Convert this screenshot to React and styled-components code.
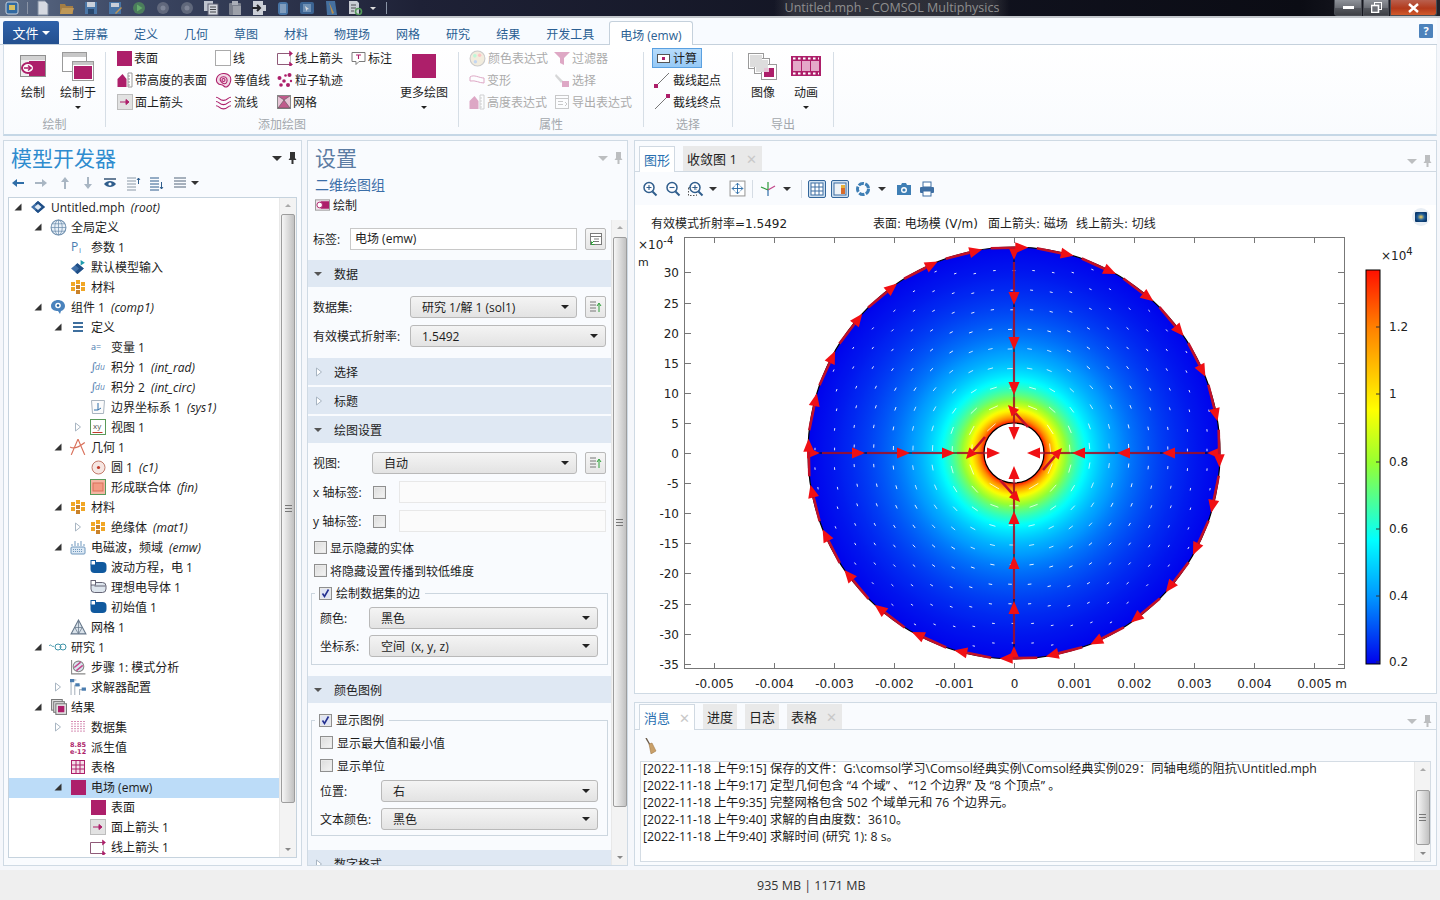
import React from 'react';
import styled, { createGlobalStyle } from 'styled-components';

const FONT = '"Open Sans", "Noto Sans CJK SC", sans-serif';
const M = '#ad1f6a';
const BL = '#2f6ea8';

const Global = createGlobalStyle`
  html, body { margin: 0; padding: 0; background: #f5f7fb; }
  #root { width: 1440px; height: 900px; overflow: hidden; }
  * { box-sizing: border-box; }
`;

const Ico = styled.svg`
  width: ${p => p.$w}px; height: ${p => p.$h}px; flex: none; display: block;
  opacity: ${p => (p.$dim ? 0.38 : 1)};
`;
const Sv = ({ s = 16, w, h, vb = '0 0 16 16', dim, children }) => (
  <Ico $w={w || s} $h={h || s} $dim={dim} viewBox={vb}>{children}</Ico>
);

const Shell = styled.div`
  width: 1440px; height: 900px; display: flex; flex-direction: column; position: relative;
  font-family: ${FONT}; font-size: 12px; color: #1c1c1c; background: #f5f7fb;
`;

/* title bar */
const TitleBar = styled.div`
  height: 18px; flex: none; display: flex; align-items: flex-start;
  background: linear-gradient(90deg, #5d6d87 0, #3c4763 130px, #1e2136 420px, #111320 900px, #0b0c14 1300px, #23242c 100%);
  border-bottom: 2px solid #c3c7cc;
`;
const QuickBar = styled.div`
  display: flex; align-items: center; height: 16px; padding-left: 4px; gap: 8px;
`;
const QuickIcon = styled.span`display: flex; opacity: .82;`;
const QuickGap = styled.span`width: 1px; height: 12px; background: #8a94a6; margin: 0 ${p => p.$m ?? 4}px;`;
const AppTitle = styled.div`
  position: absolute; left: 774px; top: 0; width: 236px; height: 16px; text-align: center;
  line-height: 16px; font-size: 12.5px; color: #8e8e8e;
  background: linear-gradient(90deg, transparent, rgba(120,120,120,.28) 8%, rgba(120,120,120,.28) 92%, transparent);
`;
const WinBtns = styled.div`margin-left: auto; margin-right: 3px; display: flex; height: 16px; gap: 1px;`;
const WinBtn = styled.div`
  width: ${p => p.$w}px; height: 16px; display: flex; align-items: center; justify-content: center;
  border: 1px solid #4a4d55; border-top: none;
  border-radius: ${p => p.$r || '0'};
  background: ${p => (p.$close
    ? 'linear-gradient(180deg, #b9604e 0, #b33a1c 55%, #d25a2c 100%)'
    : 'linear-gradient(180deg, #8e9299 0, #6d7077 50%, #55585f 52%, #3e4046 100%)')};
`;

/* ribbon */
const TabRow = styled.div`
  height: 27px; flex: none; display: flex; align-items: flex-end; padding-left: 3px;
  background: #f8fbff; border-bottom: 1px solid #c5d1dc; margin: 0 3px 0 0;
`;
const FileBtn = styled.div`
  width: 56px; height: 23px; display: flex; align-items: center; justify-content: center; gap: 3px;
  color: #fff; font-size: 13px; border-radius: 2px 2px 0 0;
  background: linear-gradient(180deg, #2f62aa, #24508f);
`;
const Caret = styled.span`
  display: inline-block; flex: none; width: 0; height: 0;
  border-left: ${p => p.$s || 4}px solid transparent; border-right: ${p => p.$s || 4}px solid transparent;
  border-top: ${p => p.$s || 4}px solid ${p => p.$c || '#222'};
  margin: ${p => p.$m || '0'};
`;
const CaretUp = styled(Caret)`transform: rotate(180deg);`;
const RTab = styled.div`
  height: 23px; padding: 4px 13px 0; font-size: 12px; color: #2b5f93; line-height: 20px;
  &:first-of-type { margin-left: 1px; }
`;
const RTabActive = styled.div`
  height: 24px; padding: 3px 10px 0; margin: 0 0 -1px 2px; line-height: 21px; color: #2b5f93;
  background: #fff; border: 1px solid #c5d1dc; border-bottom: none; border-radius: 3px 3px 0 0;
  white-space: nowrap;
`;
const HelpBtn = styled.div`
  margin-left: auto; margin-right: 4px; margin-bottom: 6px; width: 14px; height: 14px; background: #4d82bb;
  color: #fff; font-size: 11px; font-weight: 700; text-align: center; line-height: 14px; border-radius: 1px;
`;
const Ribbon = styled.div`
  height: 91px; flex: none; margin: 0 3px; display: flex;
  background: linear-gradient(180deg, #fff 0, #f9fbfe 100%);
  border-bottom: 2px solid #c5d7e6; border-left: 1px solid #d3dee8; border-right: 1px solid #e3eaf0;
`;
const RGroup = styled.div`width: ${p => p.$w}px; flex: none; display: flex; flex-direction: column;`;
const RBody = styled.div`
  height: 72px; flex: none; padding: 2px 0 0 ${p => p.$pl || 0}px; display: flex;
`;
const RLabel = styled.div`height: 16px; text-align: center; color: #a3a8ad; font-size: 12px; line-height: 16px;`;
const RSep = styled.div`width: 1px; flex: none; background: #d6dee6; margin: 7px 0 7px;`;
const SmallCol = styled.div`width: ${p => p.$w}px; flex: none; display: flex; flex-direction: column;`;
const SmallBtn = styled.div`
  height: 22px; display: flex; align-items: center; gap: 2px; white-space: nowrap;
  color: ${p => (p.$off ? '#ababab' : '#1c1c1c')};
`;
const ActiveBtn = styled.div`
  height: 20px; margin: 1px 0 1px -1px; width: 50px; display: flex; align-items: center; gap: 3px; padding-left: 4px;
  background: linear-gradient(180deg, #b7dcfb, #96c9f6); border: 1px solid #5aa0e0;
`;
const BigBtn = styled.div`
  width: ${p => p.$w}px; flex: none; display: flex; flex-direction: column; align-items: center; white-space: nowrap;
`;
const BigIcon = styled.div`height: 38px; display: flex; align-items: center; justify-content: center;`;
const BigText = styled.div`height: 16px; line-height: 16px;`;
const BigCaret = styled.div`height: 12px; display: flex; align-items: center;`;

/* workspace */
const Work = styled.div`
  flex: 1; display: flex; padding: 4px 3px 4px; gap: 5px; min-height: 0;
`;
const Panel = styled.div`
  background: #f9fbfe; border: 1px solid #cfdae4; display: flex; flex-direction: column; min-height: 0; overflow: hidden;
  width: ${p => (p.$w ? p.$w + 'px' : 'auto')}; flex: none;
  height: ${p => (p.$h ? p.$h + 'px' : 'auto')};
`;
const Stack = styled.div`flex: none; width: 803px; margin-left: 1px; display: flex; flex-direction: column; gap: 8px;`;
const HeadRow = styled.div`
  display: flex; align-items: center; height: 33px; flex: none; padding: 1px 4px 0 7px;
`;
const BigTitle = styled.div`font-size: 21px; color: ${p => p.$c}; line-height: 30px;`;
const PinBox = styled.div`
  margin-left: auto; display: flex; align-items: center; gap: 6px; opacity: ${p => (p.$dim ? 0.3 : 1)};
`;
const ToolRow = styled.div`
  display: flex; align-items: center; height: ${p => p.$h}px; flex: none; padding-left: ${p => p.$pl}px; gap: ${p => p.$g || 0}px;
  background: ${p => p.$bg || 'transparent'};
`;
const ToolCell = styled.div`
  display: flex; align-items: center; justify-content: center; width: ${p => p.$w}px; flex: none; margin-left: ${p => p.$ml || 0}px;
`;
const ToolSep = styled.div`width: 1px; height: 18px; background: #d5dce4; flex: none; margin: 0 ${p => p.$r}px 0 ${p => p.$l}px;`;

const TreeBox = styled.div`
  margin: 5px 4px 0; height: 661px; flex: none; background: #fff; border: 1px solid #c6d3de; display: flex;
`;
const TreeList = styled.div`flex: 1; min-width: 0; overflow: hidden;`;
const TreeRowEl = styled.div`
  height: 20px; display: flex; align-items: center; padding: 0 0 2px ${p => 3 + p.$d * 20}px; white-space: nowrap;
  background: ${p => (p.$sel ? '#bcdcf8' : 'transparent')}; color: #1c1c1c;
`;
const Twisty = styled.span`
  width: 12px; height: 12px; flex: none; display: flex; align-items: center; justify-content: center;
`;
const TreeIcon = styled.span`width: 18px; height: 18px; flex: none; margin-left: 5px; display: flex; align-items: center; justify-content: center;`;
const TreeLabel = styled.span`margin-left: 4px;`;
const Tag = styled.i`margin-left: 6px; color: #222;`;

const ScrollTrack = styled.div`
  width: ${p => p.$w || 17}px; flex: none; background: #f3f3f3; border-left: 1px solid #e8e8e8;
  display: flex; flex-direction: column; align-items: center;
`;
const ScrollEnd = styled.div`
  height: 15px; flex: none; display: flex; align-items: center; justify-content: center; margin: ${p => p.$m || '0'};
`;
const ScrollThumb = styled.div`
  width: 14px; flex: none; height: ${p => p.$h}px; margin-top: ${p => p.$t}px; border: 1px solid #9d9d9d; border-radius: 2px;
  background: linear-gradient(90deg, #f6f6f6, #d9d9d9 55%, #c1c1c1);
  display: flex; align-items: center; justify-content: center;
`;
const Grip = styled.div`
  width: 7px; height: 7px;
  background: repeating-linear-gradient(180deg, #777 0 1px, transparent 1px 3px);
`;

/* settings */
const SubTitle = styled.div`
  height: 21px; flex: none; padding-left: 7px; font-size: 14px; color: #3b6ea8; line-height: 22px;
`;
const ActRow = styled.div`height: 20px; flex: none; padding-left: 7px; display: flex; align-items: center; gap: 3px;`;
const SetBody = styled.div`flex: 1; min-height: 0; display: flex; margin-top: 5px;`;
const SetScroll = styled.div`width: 303px; flex: none; overflow: hidden;`;
const Row = styled.div`
  height: 22px; display: flex; align-items: center; padding: 0 ${p => (p.$pr === undefined ? 5 : p.$pr)}px 0 ${p => (p.$pl === undefined ? 5 : p.$pl)}px;
  margin-top: ${p => p.$mt || 0}px; white-space: nowrap;
`;
const RowLabel = styled.div`width: ${p => p.$l}px; flex: none;`;
const TextInput = styled.div`
  flex: 1; height: 22px; background: ${p => (p.$off ? '#fbfbfb' : '#fff')}; border: 1px solid ${p => (p.$off ? '#e8e8e8' : '#c8c8c8')};
  padding-left: 4px; line-height: 20px; margin-left: ${p => p.$ml || 0}px;
`;
const Select = styled.div`
  flex: 1; height: 22px; display: flex; align-items: center; justify-content: space-between; padding: 0 7px 0 11px;
  border: 1px solid #b9b9b9; border-radius: 3px; background: linear-gradient(180deg, #f4f4f4, #e3e3e3);
`;
const SideBtn = styled.div`
  width: 21px; height: 22px; flex: none; margin-left: 8px; display: flex; align-items: center; justify-content: center;
  border: 1px solid #b9b9b9; border-radius: 2px; background: linear-gradient(180deg, #f6f6f6, #e6e6e6);
`;
const Check = styled.span`
  width: 13px; height: 13px; flex: none; border: 1px solid #8f8f8f; display: inline-flex; align-items: center; justify-content: center;
  background: ${p => (p.$on ? '#fff' : 'linear-gradient(135deg, #dcdcdc, #f4f4f4)')}; outline: 1px solid #e9e9e9; outline-offset: -2px;
`;
const CheckRow = styled.div`
  height: 23px; display: flex; align-items: center; gap: ${p => p.$g || 3}px; padding-left: ${p => p.$pl || 6}px;
`;
const Sect = styled.div`
  height: 27px; display: flex; align-items: center; background: #dfe8f3; padding-left: 6px;
  margin-top: ${p => p.$mt || 0}px; font-size: 12px;
`;
const SectArrow = styled.span`width: 11px; flex: none; display: flex; align-items: center; margin-right: 9px;`;
const Fset = styled.fieldset`
  margin: ${p => p.$mt || 0}px 0 0 3px; width: 297px; padding: 0 9px ${p => p.$pb}px 0; border: 1px solid #ccd6df; min-width: 0;
`;
const Leg = styled.legend`
  display: flex; align-items: center; gap: 4px; padding: 0 5px 0 4px; margin-left: 3px; height: 20px;
`;
const Spacer = styled.div`height: ${p => p.$h}px; flex: none;`;

/* graphics */
const TabStrip = styled.div`
  height: ${p => p.$h}px; flex: none; display: flex; align-items: flex-end; padding: 0 4px; gap: 8px;
  border-bottom: 1px solid #d0d9e2;
`;
const GTab = styled.div`
  height: ${p => (p.$on ? 26 : 25)}px; padding: 0 ${p => p.$pr ?? 4}px 0 4px; display: flex; align-items: center; gap: ${p => p.$gap ?? 9}px;
  font-size: 13px; color: ${p => (p.$on ? '#2a6fb0' : '#222')}; white-space: nowrap;
  background: ${p => (p.$on ? '#fff' : '#e9e9e9')};
  border: ${p => (p.$on ? '1px solid #d0d9e2' : 'none')}; border-bottom: none;
  margin-bottom: ${p => (p.$on ? -1 : 0)}px;
`;
const Close = styled.span`color: #c8c8c8; font-size: 13px;`;
const PinSlot = styled.div`margin-left: auto; align-self: center; padding-top: 10px;`;
const ToolToggle = styled.div`
  width: 18px; height: 18px; flex: none; display: flex; align-items: center; justify-content: center;
  background: #cfe0f0; border: 1px solid #33669b; border-radius: 2px;
`;
const PlotArea = styled.div`flex: 1; background: #fff; min-height: 0;`;
const PlotSvg = styled.svg`display: block; width: 801px; height: 488px;`;
const LogBar = styled.div`height: 31px; flex: none; padding: 8px 0 0 9px;`;
const LogBox = styled.div`
  margin: 0 5px; height: 101px; flex: none; display: flex; background: #fff; border: 1px solid #d4dce4;
`;
const LogText = styled.div`flex: 1; padding: 0 2px; min-width: 0; font-size: 12.25px;`;
const LogLine = styled.div`height: 17px; line-height: 13px; white-space: nowrap;`;
const Status = styled.div`
  height: 30px; flex: none; background: #efefef; font-size: 12.5px; color: #333; display: flex; align-items: center; padding-left: 757px;
`;

/* ---- icons ---- */
const plotIcon = (
  <Sv w={26} h={22} vb="0 0 26 22">
    <rect x=".5" y=".5" width="25" height="21" fill="#efeff1" stroke="#8f8f8f" />
    <rect x="1" y="1" width="24" height="4" fill="#d2d2d2" />
    <rect x="9" y="6" width="16" height="15" fill={M} />
    <ellipse cx="8" cy="13" rx="6" ry="5" fill="#fff" stroke={M} strokeWidth="2" />
    <path d="M4 13h6M8 10.5l3 2.5-3 2.5" fill="none" stroke={M} strokeWidth="1.6" />
  </Sv>
);
const plotInIcon = (
  <Sv w={32} h={29} vb="0 0 32 29">
    <rect x=".5" y=".5" width="24" height="19" fill="#fff" stroke="#9a9a9a" />
    <rect x="1" y="1" width="23" height="4" fill="#c7c7c7" />
    <rect x="10.5" y="9.5" width="21" height="19" fill="#fff" stroke="#9a9a9a" />
    <rect x="11" y="10" width="20" height="3" fill="#c7c7c7" />
    <rect x="12" y="14" width="18" height="13" fill={M} />
  </Sv>
);
const I = {
  surface: <Sv s={15} vb="0 0 15 15"><rect width="15" height="15" fill={M} /></Sv>,
  height: <Sv s={16}><path d="M.5 15V7l5-5 4 5v8z" fill={M} /><path d="M11 1h4v14h-4z" fill="#fff" stroke="#999" /><path d="M11 4h2M11 7h2M11 10h2M11 13h2" stroke="#999" /></Sv>,
  arrowSurf: <Sv s={16}><rect x=".5" y=".5" width="15" height="15" fill="#e2e2e2" stroke="#bdbdbd" /><path d="M3 8h8M9 5.5l3 2.5-3 2.5z" fill={M} stroke={M} /></Sv>,
  line: <Sv s={16}><rect x=".5" y=".5" width="15" height="15" fill="#fff" stroke="#aaa" /></Sv>,
  contour: <Sv s={17} vb="0 0 16 16"><path d="M2 5c2-4 9-5 12-1 2 3 0 9-3 10-2 1-3-2-5-2C3 12 0 9 2 5z" fill="#f2d8e6" stroke={M} /><path d="M5 6c1-2 5-2 6 0 1 2 0 5-2 5s-5-3-4-5z" fill="none" stroke={M} /><circle cx="8" cy="7.5" r="1.4" fill="none" stroke={M} /></Sv>,
  stream: <Sv s={17} vb="0 0 16 16"><path d="M1 3c3 0 3 3 7 3s4-3 7-3M1 7c3 0 3 3 7 3s4-3 7-3M1 11c3 0 3 3 7 3s4-3 7-3" fill="none" stroke={M} /></Sv>,
  lineArrow: <Sv s={16}><path d="M.5 3.5h13M.5 3.5v11h13" fill="none" stroke="#8f5a78" /><path d="M13.5 3.5v11" stroke="#bbb" /><path d="M12.5 1l3 2.5-3 2.5zM12.5 12l3 2.5-3 2.5z" fill={M} stroke={M} strokeWidth=".6" /></Sv>,
  particle: <Sv s={16}><g fill={M}><circle cx="2.5" cy="6" r="2" /><circle cx="7" cy="9" r="1.8" /><circle cx="12.5" cy="3" r="2" /><circle cx="8.5" cy="3.5" r="1.3" /><circle cx="4" cy="13" r="1.8" /><circle cx="11" cy="13" r="2" /><circle cx="14" cy="9" r="1.2" /></g></Sv>,
  mesh: <Sv s={14} vb="0 0 14 14"><rect x=".5" y=".5" width="13" height="13" fill="#e6c4d6" stroke="#888" /><path d="M1 13 7 5l6 8zM1 1l6 4 6-4" fill="#c05a8c" stroke="#555" strokeWidth=".6" /></Sv>,
  annot: <Sv s={15} vb="0 0 15 15"><path d="M1 1.5h13v9H8l-3 3v-3H1z" fill="#fff" stroke="#7a7a7a" /><path d="M5 4h5M7.5 4v4" stroke={M} strokeWidth="1.1" /></Sv>,
  colorExpr: <Sv s={17} dim vb="0 0 16 16"><circle cx="8" cy="8" r="7" fill="#e0cfa8" stroke="#777" /><circle cx="5.5" cy="5.5" r="1.7" fill="#5e9" /><circle cx="10" cy="5" r="1.6" fill="#f66" /><circle cx="6" cy="11" r="1.6" fill="#69d" /></Sv>,
  deform: <Sv s={16} dim><path d="M1 5c4-3 9 1 14 1v5c-5 0-8-3-14-2z" fill="#fff" stroke={M} /></Sv>,
  heightExpr: <Sv s={16} dim><path d="M.5 15V7l5-5 4 5v8z" fill={M} /><path d="M11 1h4v14h-4z" fill="#fff" stroke="#888" /><path d="M11 4h2M11 7h2M11 10h2M11 13h2" stroke="#888" /></Sv>,
  filter: <Sv s={16} dim><path d="M0 2h16l-6 6v7l-4-2V8z" fill={M} /></Sv>,
  select: <Sv s={16} dim><path d="M2 2l7 7-2 2-6-7z" fill="#999" /><rect x="8" y="9" width="7" height="6" fill={M} /></Sv>,
  exportExpr: <Sv s={16} dim><rect x="1.5" y="1.5" width="13" height="13" fill="#fff" stroke="#777" /><path d="M1.5 4.5h13M4 7.5h5M4 10.5h5M11 8l2 2-2 2" fill="none" stroke="#777" /></Sv>,
  compute: <Sv s={13} vb="0 0 13 13"><rect x=".5" y="2.5" width="12" height="8" fill="#fff" stroke="#555" /><rect x="5" y="5" width="3" height="3" fill={M} /></Sv>,
  cutStart: <Sv s={18} vb="0 0 18 18"><path d="M3 15 16 2" stroke="#777" /><rect x="1" y="13" width="4" height="4" fill={M} /></Sv>,
  cutEnd: <Sv s={18} vb="0 0 18 18"><path d="M2 16 15 3" stroke="#777" /><rect x="13" y="1" width="4" height="4" fill={M} /></Sv>,
  image: <Sv w={30} h={27} vb="0 0 30 27"><g fill="#fff" stroke="#9a9a9a"><rect x=".5" y=".5" width="15" height="15" /><rect x="6.5" y="5.5" width="15" height="15" /><rect x="13.5" y="11.5" width="15" height="15" /></g><rect x="2" y="2" width="12" height="12" fill="#ddd" /><rect x="8" y="7" width="12" height="12" fill="#ddd" /><rect x="16" y="15" width="10" height="9" fill={M} /><rect x="16" y="15" width="5" height="4" fill="#e6c4d6" /></Sv>,
  movie: <Sv w={30} h={20} vb="0 0 30 20">
    <rect width="30" height="20" fill={M} /><rect x="2" y="5" width="8" height="10" fill="#e4a8c8" /><rect x="11" y="5" width="8" height="10" fill="#e4a8c8" /><rect x="20" y="5" width="8" height="10" fill="#e4a8c8" />
    <path d="M2 2.5h26M2 17.5h26" stroke="#fff" strokeWidth="2" strokeDasharray="2.5 2.5" />
  </Sv>,
  /* tree */
  root: <Sv s={16}><path d="M1 8l7-6 7 6-7 6z" fill="#3f6fa8" /><path d="M8 2l7 6-7 6-3-2.5L9 8 5 4.5z" fill="#1f4e86" /><path d="M4.5 8 8 5l3.5 3L8 11z" fill="#dfe9f4" /></Sv>,
  globe: <Sv s={17} vb="0 0 16 16"><circle cx="8" cy="8" r="7" fill="#e8f0f8" stroke="#6f8fae" /><path d="M1 8h14M8 1v14M2 4.5h12M2 11.5h12" stroke="#6f8fae" strokeWidth=".7" /><ellipse cx="8" cy="8" rx="3.5" ry="7" fill="none" stroke="#6f8fae" strokeWidth=".7" /></Sv>,
  param: <Sv s={16}><text x="1" y="12" fontFamily="Open Sans" fontSize="12" fill="#4a7cb0">P</text><text x="9" y="14" fontFamily="Open Sans" fontSize="8" fill="#4a7cb0">i</text></Sv>,
  defIn: <Sv s={17} vb="0 0 16 16"><path d="M1 9l6-5 6 5-6 5z" fill="#3f6fa8" /><path d="M7 4l6 5-6 5-2-1.8L8.5 9 5 5.8z" fill="#1f4e86" /><path d="M10 1v5l4-2.5z" fill="#1e9cae" /></Sv>,
  material: <Sv s={15} vb="0 0 15 15"><g fill="#f0a626"><rect x="0" y="2" width="4" height="4" /><rect x="5" y="0" width="4" height="4" /><rect x="10" y="2" width="4" height="4" /><rect x="0" y="7" width="4" height="4" /><rect x="10" y="7" width="4" height="4" /></g><g fill="#c9822a"><rect x="5" y="5" width="4" height="4" /><rect x="5" y="10" width="4" height="4" /></g></Sv>,
  comp: <Sv s={16}><path d="M1 7c0-4 4-6 7-6s7 2 7 6-4 5-4 5l-1 3-2-3c-3 0-7-1-7-5z" fill="#4a83bd" /><circle cx="8" cy="6.5" r="2.8" fill="#fff" /><circle cx="8" cy="6.5" r="1.3" fill="#1f5d99" /></Sv>,
  defs: <Sv s={14} vb="0 0 14 14"><path d="M2 3h10M2 7h10M2 11h10" stroke="#3e6f9e" strokeWidth="1.8" /></Sv>,
  vari: <Sv s={16}><text x="1" y="11" fontFamily="Open Sans" fontSize="9" fill="#4a7cb0">a=</text></Sv>,
  integ: <Sv s={16}><text x="0" y="12" fontFamily="DejaVu Serif" fontStyle="italic" fontSize="12" fill="#5a86b4">∫</text><text x="5" y="11" fontFamily="Open Sans" fontStyle="italic" fontSize="8.5" fill="#5a86b4">du</text></Sv>,
  sys: <Sv s={16}><path d="M1.5 1.5h13l-1 13h-11z" fill="#fbfbfb" stroke="#a9b4bf" /><path d="M8 4v7H4M8 11l3-2" fill="none" stroke="#2f6ea8" /></Sv>,
  view: <Sv s={16}><rect x=".5" y=".5" width="15" height="15" fill="#fff" stroke="#5a9a5a" /><text x="3" y="10" fontFamily="Open Sans" fontSize="8" fill="#555">xy</text><path d="M2.5 13.5h10" stroke="#c0392b" /></Sv>,
  geom: <Sv s={18} vb="0 0 16 16"><path d="M8 1 2 15M8 1l6 14M1 8c3 2 8 0 13-4" fill="none" stroke="#d9705a" strokeWidth="1.1" /></Sv>,
  circ: <Sv s={15} vb="0 0 15 15"><circle cx="7.5" cy="7.5" r="6.5" fill="#f6e6e2" stroke="#c47a6a" /><circle cx="7.5" cy="7.5" r="1.6" fill="#c0392b" /></Sv>,
  union: <Sv s={16}><rect x=".5" y=".5" width="15" height="15" fill="#f4b6a4" stroke="#5a9a5a" /><rect x="3" y="4" width="10" height="8" fill="#f39b84" stroke="#d9705a" /></Sv>,
  emw: <Sv s={16}><rect x="1" y="8" width="14" height="7" rx="1" fill="#dbe8f4" stroke="#6f97bd" /><path d="M3 10.5h10M3 12.5h10" stroke="#6f97bd" strokeDasharray="1 1" /><path d="M2 7V5M5 7V2M8 7V4M11 7V2M14 7V5" stroke="#6f97bd" /></Sv>,
  wave: <Sv s={16} w={17}><rect x="0" y="3" width="16" height="11" rx="4" fill="#10599e" /><rect x=".5" y="1.5" width="4.5" height="4.5" fill="#fff" stroke="#10599e" /></Sv>,
  pec: <Sv s={16} w={17}><rect x=".5" y="3.5" width="15" height="10" rx="3.5" fill="#dde5ed" stroke="#667" /><rect x=".5" y="1.5" width="4.5" height="4.5" fill="#fff" stroke="#667" /><path d="M4 7h11" stroke="#667" /></Sv>,
  meshN: <Sv s={17} vb="0 0 16 16"><path d="M8 1 1 14h14z" fill="#d9e2ea" stroke="#66778a" /><path d="M4.5 8h7M8 1v13M4.5 8 8 14l3.5-6" fill="none" stroke="#66778a" strokeWidth=".7" /></Sv>,
  study: <Sv s={18} vb="0 0 18 12"><path d="M0 5c2-3 3 2 5 0" fill="none" stroke="#3e93a8" /><circle cx="9" cy="6" r="3" fill="none" stroke="#3e93a8" /><circle cx="14" cy="6" r="3" fill="none" stroke="#3e93a8" /></Sv>,
  step: <Sv s={17} vb="0 0 16 16"><path d="M1.5 1v13h13" fill="none" stroke="#888" /><circle cx="8" cy="7" r="5" fill="#d9e6f0" stroke="#888" /><path d="M4 8l6-5M6 11l6-5" stroke="#c2478a" strokeWidth="1.4" /></Sv>,
  solver: <Sv s={17} vb="0 0 16 16"><path d="M1 15V1h5M4.5 15V6h5M9 15V10h6" fill="none" stroke="#aab4bf" /><rect x="0" y="0" width="4" height="3" fill="#4a7db0" /><rect x="5" y="4" width="4" height="3" fill="#4a7db0" /><rect x="11" y="8" width="4" height="3" fill="#4a7db0" /></Sv>,
  results: <Sv s={17} vb="0 0 16 16"><g fill="#e6e6e6" stroke="#777"><rect x="1.5" y=".5" width="10" height="10" /><rect x="3.5" y="2.5" width="10" height="10" /><rect x="5.5" y="4.5" width="10" height="10" /></g><rect x="7.5" y="6.5" width="6" height="6" fill={M} /></Sv>,
  dataset: <Sv s={14} vb="0 0 14 14"><path d="M1 1v12M4 1v12M7 1v12M10 1v12M13 1v12" stroke={M} strokeDasharray="1 1.4" strokeWidth="1" /></Sv>,
  derived: <Sv s={16}><text x="0" y="7.5" fontFamily="DejaVu Sans" fontWeight="700" fontSize="6.5" fill={M}>8.85</text><text x="0" y="14.5" fontFamily="DejaVu Sans" fontWeight="700" fontSize="6.5" fill={M}>e-12</text></Sv>,
  table: <Sv s={14} vb="0 0 14 14"><rect x=".5" y=".5" width="13" height="13" fill="#f4dfe9" stroke={M} /><path d="M5 1v12M9 1v12M1 5h12M1 9h12" stroke={M} /></Sv>,
  treeSurf: <Sv s={15} vb="0 0 15 15"><rect width="15" height="15" fill={M} /></Sv>,
  sideBtnExport: <Sv s={14} vb="0 0 14 14"><rect x="1.5" y="1.5" width="11" height="11" fill="#fff" stroke="#7a7a7a" /><path d="M1.5 4.5h11M5 7h5M5 9.5h5" fill="none" stroke="#7a7a7a" /><path d="M2 12l3-3M2.5 9.5v3h3" fill="none" stroke="#2ea03a" /></Sv>,
  sideBtnList: <Sv s={14} vb="0 0 14 14"><path d="M1 2h6M1 5h6M1 8h6M1 11h6" stroke="#777" /><path d="M10 12V4M8 6l2-3 2 3" fill="none" stroke="#2ea03a" /></Sv>,
  plotSmall: <Sv s={16} w={15} vb="0 0 16 16"><rect x=".5" y="2.5" width="15" height="11" fill="#f2e4ec" stroke="#999" /><rect x="6" y="4" width="9" height="8" fill={M} /><circle cx="5" cy="8" r="3" fill="#fff" stroke={M} /></Sv>,
};

const Tri = ({ open }) => (open
  ? <Sv s={10} vb="0 0 10 10"><path d="M1.5 8.5H8.5V1.5z" fill="#333" /></Sv>
  : <Sv s={10} vb="0 0 10 10"><path d="M2.5 1v8l5-4z" fill="#fff" stroke="#a8b5c2" /></Sv>);

const PinIcons = ({ dim }) => (
  <PinBox $dim={dim}>
    <Caret $s={5} $c="#333" />
    <Sv w={9} h={12} vb="0 0 9 12"><path d="M2 0h5v6l1.5 2h-3v4h-2V8h-3L2 6z" fill="#333" /></Sv>
  </PinBox>
);

const ZoomIc = ({ plus, box }) => (
  <Sv s={16}>
    {box && <rect x=".5" y="6.5" width="8" height="8" fill="none" stroke="#555" strokeDasharray="1.5 1.5" />}
    <circle cx="7" cy="6.5" r="5" fill="#fff" fillOpacity=".6" stroke="#2f5d8c" strokeWidth="1.5" />
    <path d="M10.5 10.5l4 4" stroke="#2f5d8c" strokeWidth="2" />
    <path d={plus ? 'M4.5 6.5h5M7 4v5' : 'M4.5 6.5h5'} stroke="#2f5d8c" strokeWidth="1.1" />
  </Sv>
);

const tree = [
  [0, 1, 'root', 'Untitled.mph', 'root'],
  [1, 1, 'globe', '全局定义'],
  [2, 0, 'param', '参数 1'],
  [2, 0, 'defIn', '默认模型输入'],
  [2, 0, 'material', '材料'],
  [1, 1, 'comp', '组件 1', 'comp1'],
  [2, 1, 'defs', '定义'],
  [3, 0, 'vari', '变量 1'],
  [3, 0, 'integ', '积分 1', 'int_rad'],
  [3, 0, 'integ', '积分 2', 'int_circ'],
  [3, 0, 'sys', '边界坐标系 1', 'sys1'],
  [3, 2, 'view', '视图 1'],
  [2, 1, 'geom', '几何 1'],
  [3, 0, 'circ', '圆 1', 'c1'],
  [3, 0, 'union', '形成联合体', 'fin'],
  [2, 1, 'material', '材料'],
  [3, 2, 'material', '绝缘体', 'mat1'],
  [2, 1, 'emw', '电磁波，频域', 'emw'],
  [3, 0, 'wave', '波动方程，电 1'],
  [3, 0, 'pec', '理想电导体 1'],
  [3, 0, 'wave', '初始值 1'],
  [2, 0, 'meshN', '网格 1'],
  [1, 1, 'study', '研究 1'],
  [2, 0, 'step', '步骤 1: 模式分析'],
  [2, 2, 'solver', '求解器配置'],
  [1, 1, 'results', '结果'],
  [2, 2, 'dataset', '数据集'],
  [2, 0, 'derived', '派生值'],
  [2, 0, 'table', '表格'],
  [2, 1, 'treeSurf', '电场 (emw)', null, true],
  [3, 0, 'treeSurf', '表面'],
  [3, 0, 'arrowSurf', '面上箭头 1'],
  [3, 0, 'lineArrow', '线上箭头 1'],
];

const Scrollbar = ({ top, h, w }) => (
  <ScrollTrack $w={w}>
    <ScrollEnd><CaretUp $s={3} $c="#aaa" /></ScrollEnd>
    <ScrollThumb $t={top} $h={h}><Grip /></ScrollThumb>
    <ScrollEnd $m="auto 0 0"><Caret $s={3} $c="#888" /></ScrollEnd>
  </ScrollTrack>
);

/* ---- plot computation ---- */
const CX = 1014, CY = 453, RO = 206, RI = 30;
const rainbow = [
  [0, [0, 0, 236]], [0.17, [0, 150, 255]], [0.315, [0, 255, 255]], [0.51, [150, 255, 50]],
  [0.645, [255, 255, 0]], [0.855, [255, 128, 0]], [1, [255, 16, 0]],
];
const colorAt = f => {
  const t = Math.max(0, Math.min(1, f));
  for (let i = 1; i < rainbow.length; i++) {
    if (t <= rainbow[i][0]) {
      const [a, ca] = rainbow[i - 1]; const [b, cb] = rainbow[i];
      const u = (t - a) / (b - a);
      return `rgb(${ca.map((c, k) => Math.round(c + (cb[k] - c) * u)).join(',')})`;
    }
  }
  return 'rgb(255,16,0)';
};
const fieldStops = [];
for (let i = 0; i <= 60; i++) {
  const r = RI + (RO - RI) * Math.pow(i / 60, 1.5);
  const v = 1.37 * RI / r;
  fieldStops.push({ off: r / RO, col: colorAt((v - 0.197) / 1.173) });
}
const dashes = [];
for (let gy = CY - 201; gy <= CY + 201; gy += 19.6) {
  for (let gx = CX - 198; gx <= CX + 201; gx += 19.6) {
    const px = gx + ((Math.round(gy) * 7) % 5) - 2, py = gy + ((Math.round(gx) * 3) % 5) - 2;
    const dx = px - CX, dy = py - CY, r = Math.hypot(dx, dy);
    if (r < RI + 4 || r > RO - 6) continue;
    const L = Math.max(1.5, Math.min(11, 480 / r));
    const tx = -dy / r, ty = dx / r;
    dashes.push([px - tx * L / 2, py - ty * L / 2, px + tx * L / 2, py + ty * L / 2, r]);
  }
}
const RedArrow = ({ x1, y1, x2, y2, hl = 13, hw = 5.5, op = 0.85, sw = 2.2 }) => {
  const d = Math.hypot(x2 - x1, y2 - y1); const ux = (x2 - x1) / d, uy = (y2 - y1) / d;
  const bx = x2 - ux * hl, by = y2 - uy * hl;
  return (
    <g>
      <line x1={x1} y1={y1} x2={bx} y2={by} stroke="#c21028" strokeWidth={sw} opacity={op} />
      <polygon points={`${x2},${y2} ${bx - uy * hw},${by + ux * hw} ${bx + uy * hw},${by - ux * hw}`} fill="#f00f14" />
    </g>
  );
};
const clampR = v => Math.max(CY - RO, Math.min(CY + RO, v));
const clampX = v => Math.max(CX - RO, Math.min(CX + RO, v));
const axisArrows = [];
[440, 395, 350, 305, 260].forEach(t => axisArrows.push({ x1: CX, y1: clampR(t - 43), x2: CX, y2: t }));
[466, 511, 556, 601, 646].forEach(t => axisArrows.push({ x1: CX, y1: clampR(t + 43), x2: CX, y2: t }));
[1000, 955, 910, 865, 820].forEach(t => axisArrows.push({ x1: clampX(t - 43), y1: CY, x2: t, y2: CY }));
[1027, 1072, 1117, 1162, 1207].forEach(t => axisArrows.push({ x1: clampX(t + 43), y1: CY, x2: t, y2: CY }));
const ringArrows = [
  { x1: 1028, y1: 427, x2: 1008, y2: 405 }, { x1: 1043, y1: 470, x2: 1062, y2: 448 },
  { x1: 1000, y1: 480, x2: 1020, y2: 502 }, { x1: 985, y1: 437, x2: 966, y2: 459 },
];
const edgeArrows = [];
for (let i = 0; i < 28; i++) {
  const deg = 4 + i * 12.857; const a = deg * Math.PI / 180; const b = (deg - 10.5) * Math.PI / 180;
  edgeArrows.push({
    x1: CX + RO * Math.sin(b), y1: CY - RO * Math.cos(b),
    x2: CX + RO * Math.sin(a), y2: CY - RO * Math.cos(a),
  });
}
const yVals = [30, 25, 20, 15, 10, 5, 0, -5, -10, -15, -20, -25, -30, -35];
const xVals = ['-0.005', '-0.004', '-0.003', '-0.002', '-0.001', '0', '0.001', '0.002', '0.003', '0.004', '0.005'];
const barTicks = [['1.2', 327], ['1', 394], ['0.8', 462], ['0.6', 529], ['0.4', 596], ['0.2', 662]];
const T = { fontFamily: '"DejaVu Sans", "Noto Sans CJK SC", sans-serif', fontSize: 12, fill: '#222' };

const Plot = () => (
  <PlotSvg viewBox="635 205 801 488">
    <defs>
      <radialGradient id="field" gradientUnits="userSpaceOnUse" cx={CX} cy={CY} r={RO}>
        {fieldStops.map((s, i) => <stop key={i} offset={s.off} stopColor={s.col} />)}
      </radialGradient>
      <linearGradient id="bar" x1="0" y1="1" x2="0" y2="0">
        {rainbow.map(([o, c]) => <stop key={o} offset={o} stopColor={`rgb(${c.join(',')})`} />)}
      </linearGradient>
      <radialGradient id="logoG"><stop offset="0" stopColor="#f5d15a" /><stop offset=".6" stopColor="#1f5d99" /><stop offset="1" stopColor="#0b3a6e" /></radialGradient>
    </defs>
    <text x="651" y="228" {...T}>有效模式折射率=1.5492</text>
    <text x="873" y="228" {...T}>表面: 电场模 (V/m)</text>
    <text x="988" y="228" {...T}>面上箭头: 磁场</text>
    <text x="1076" y="228" {...T}>线上箭头: 切线</text>
    <rect x="684.5" y="237.5" width="660" height="431" fill="#fff" stroke="#777" />
    {xVals.map((l, i) => {
      const x = 714 + 60 * i + 0.5;
      return (
        <g key={l}>
          <path d={`M${x} 238v5M${x} 668v-5`} stroke="#777" />
          <text x={x} y="688" textAnchor="middle" {...T}>{l}</text>
        </g>
      );
    })}
    <text x="1341" y="688" textAnchor="middle" {...T}>m</text>
    {yVals.map(v => {
      const y = Math.round(453 - v * 6.02) + 0.5;
      return (
        <g key={v}>
          <path d={`M685 ${y}h6M1344 ${y}h-6`} stroke="#777" />
          <text x="679" y={y + 4} textAnchor="end" {...T}>{v}</text>
        </g>
      );
    })}
    <text x="638" y="249" {...T}>×10<tspan dy="-5" fontSize="10">-4</tspan></text>
    <text x="638" y="266" {...T} fontSize="11">m</text>
    <circle cx={CX} cy={CY} r={RO} fill="url(#field)" stroke="#000" strokeWidth="1.2" />
    {dashes.map((d, i) => (
      <line key={i} x1={d[0]} y1={d[1]} x2={d[2]} y2={d[3]} stroke="#fff" strokeWidth="1" opacity={d[4] < 110 ? 0.75 : 0.9} />
    ))}
    <path d={`M${CX - RO} ${CY}H${CX - RI}M${CX + RI} ${CY}H${CX + RO}M${CX} ${CY - RO}V${CY - RI}M${CX} ${CY + RI}V${CY + RO}`} stroke="#000" strokeWidth="1" />
    <circle cx={CX} cy={CY} r={RI} fill="#fff" stroke="#000" strokeWidth="1.2" />
    {axisArrows.map((a, i) => <RedArrow key={i} {...a} op={0.72} />)}
    {ringArrows.map((a, i) => <RedArrow key={i} {...a} hl={11} hw={5} op={1} sw={2.6} />)}
    {edgeArrows.map((a, i) => <RedArrow key={i} {...a} hl={13} hw={5.5} op={1} sw={2.6} />)}
    <rect x="1366" y="270" width="14" height="394" fill="url(#bar)" stroke="#000" />
    {barTicks.map(([l, y]) => (
      <g key={l}>
        <path d={`M1376 ${y}h4`} stroke="#333" />
        <text x="1389" y={y + 4} {...T}>{l}</text>
      </g>
    ))}
    <text x="1381" y="260" {...T}>×10<tspan dy="-5" fontSize="10">4</tspan></text>
    <circle cx="1421" cy="217" r="9" fill="#e8eef4" />
    <rect x="1415" y="212" width="12" height="10" rx="1" fill="url(#logoG)" />
  </PlotSvg>
);

/* quick access toolbar */
const qa = [
  <Sv s={16} key="a"><rect x="2" y="2" width="12" height="12" rx="2" fill="#2a6aa8" stroke="#dfe6ee" /><rect x="5" y="5" width="6" height="5" fill="#f2d15b" /></Sv>,
  'sep',
  <Sv s={16} key="b"><path d="M3 1h7l3 3v11H3z" fill="#f2f4f8" stroke="#8b98aa" /></Sv>,
  <Sv s={16} key="c"><path d="M1 4h5l1 2h7v8H1z" fill="#b8863a" /><path d="M3 8h12l-2 6H1z" fill="#d9a650" /></Sv>,
  <Sv s={16} key="d"><rect x="2" y="2" width="12" height="12" fill="#4c7fb4" /><rect x="4" y="2" width="8" height="5" fill="#e8edf3" /><rect x="5" y="9" width="6" height="5" fill="#24466d" /></Sv>,
  <Sv s={16} key="e"><rect x="2" y="2" width="12" height="12" fill="#4c7fb4" /><rect x="4" y="3" width="8" height="4" fill="#e8edf3" /><path d="M8 13l6-6 1 1-6 6z" fill="#d9a650" /></Sv>,
  <Sv s={16} key="f"><circle cx="8" cy="8" r="6" fill="#4f8a5b" /><path d="M6 4.5v7l5.5-3.5z" fill="#6fc46f" /></Sv>,
  <Sv s={16} key="g"><circle cx="8" cy="8" r="6" fill="#6a7183" /><circle cx="8" cy="8" r="2.5" fill="#8f95a5" /></Sv>,
  <Sv s={16} key="h"><circle cx="8" cy="8" r="6" fill="#6a7183" /><circle cx="8" cy="8" r="2.5" fill="#8f95a5" /></Sv>,
  <Sv s={16} key="i"><rect x="1" y="1" width="9" height="10" fill="#dfe3ea" /><rect x="5" y="4" width="10" height="11" fill="#f4f6f9" stroke="#667" /><path d="M7 7h6M7 9.5h6M7 12h6" stroke="#444" /></Sv>,
  <Sv s={16} key="j"><rect x="2" y="3" width="12" height="12" rx="1" fill="#8a8f99" /><rect x="5" y="1" width="6" height="4" fill="#c5c8cf" /><rect x="6" y="6" width="8" height="9" fill="#b4b7bd" /></Sv>,
  <Sv s={16} key="k"><rect x="2" y="1" width="10" height="14" fill="#eef1f5" /><path d="M1 8h8M6 5l3 3-3 3" fill="none" stroke="#222" strokeWidth="2" /><rect x="11" y="5" width="4" height="6" fill="#eef1f5" /></Sv>,
  <Sv s={16} key="l"><rect x="3" y="2" width="10" height="13" rx="3" fill="#4f84ba" /><path d="M6 4v9M8 4v9M10 4v9" stroke="#dbe7f2" /></Sv>,
  <Sv s={16} key="m"><rect x="1" y="2" width="14" height="12" rx="2" fill="#3f6fa3" /><rect x="4" y="4" width="8" height="8" fill="#7fa6cc" /><path d="M6 6l4 3-2 .5-.5 2z" fill="#fff" /></Sv>,
  <Sv s={16} key="n"><path d="M3 1h9l2 14H4z" fill="#4c7fb4" /><path d="M6 2l5 11-2 1z" fill="#d9a650" /></Sv>,
  <Sv s={16} key="o"><path d="M2 1h8l2 2v11H2z" fill="#eef1f5" /><path d="M4 5h5M4 8h5M4 11h3" stroke="#555" /><circle cx="11.5" cy="11.5" r="3" fill="none" stroke="#5fb35f" strokeWidth="1.6" /></Sv>,
];

const CheckMark = () => (
  <Sv s={11} vb="0 0 11 11"><rect x="1" y="1" width="9" height="9" fill="#dfe4f4" /><path d="M2.5 5.5l2 3 4-7" fill="none" stroke="#24308f" strokeWidth="1.6" /></Sv>
);

const Settings = () => (
  <Panel $w={321}>
    <HeadRow>
      <BigTitle $c="#5c7ca3">设置</BigTitle>
      <PinIcons dim />
    </HeadRow>
    <SubTitle>二维绘图组</SubTitle>
    <ActRow>{I.plotSmall}<span>绘制</span></ActRow>
    <SetBody>
      <SetScroll>
        <Spacer $h={8} />
        <Row>
          <RowLabel $l={37}>标签:</RowLabel>
          <TextInput>电场 (emw)</TextInput>
          <SideBtn>{I.sideBtnExport}</SideBtn>
        </Row>
        <Spacer $h={10} />
        <Sect><SectArrow><Caret $c="#555" /></SectArrow>数据</Sect>
        <Row $mt={9}>
          <RowLabel $l={97}>数据集:</RowLabel>
          <Select>研究 1/解 1 (sol1)<Caret /></Select>
          <SideBtn>{I.sideBtnList}</SideBtn>
        </Row>
        <Row $mt={7}>
          <RowLabel $l={97}>有效模式折射率:</RowLabel>
          <Select>1.5492<Caret /></Select>
        </Row>
        <Sect $mt={11}><SectArrow><Tri /></SectArrow>选择</Sect>
        <Sect $mt={2}><SectArrow><Tri /></SectArrow>标题</Sect>
        <Sect $mt={2}><SectArrow><Caret $c="#555" /></SectArrow>绘图设置</Sect>
        <Row $mt={9}>
          <RowLabel $l={59}>视图:</RowLabel>
          <Select>自动<Caret /></Select>
          <SideBtn>{I.sideBtnList}</SideBtn>
        </Row>
        <Row $mt={7}>
          <RowLabel $l={60}>x 轴标签:</RowLabel>
          <Check />
          <TextInput $off $ml={13} />
        </Row>
        <Row $mt={7}>
          <RowLabel $l={60}>y 轴标签:</RowLabel>
          <Check />
          <TextInput $off $ml={13} />
        </Row>
        <Spacer $h={4} />
        <CheckRow><Check /><span>显示隐藏的实体</span></CheckRow>
        <CheckRow><Check /><span>将隐藏设置传播到较低维度</span></CheckRow>
        <Fset $pb={7} $mt={1}>
          <Leg>
            <Check $on><CheckMark /></Check>
            <span>绘制数据集的边</span>
          </Leg>
          <Spacer $h={4} />
          <Row $pl={8} $pr={0}>
            <RowLabel $l={49}>颜色:</RowLabel>
            <Select>黑色<Caret /></Select>
          </Row>
          <Row $pl={8} $pr={0} $mt={6}>
            <RowLabel $l={49}>坐标系:</RowLabel>
            <Select>空间&nbsp;&nbsp;(x, y, z)<Caret /></Select>
          </Row>
        </Fset>
        <Sect $mt={11}><SectArrow><Caret $c="#555" /></SectArrow>颜色图例</Sect>
        <Fset $pb={5} $mt={7}>
          <Leg>
            <Check $on><CheckMark /></Check>
            <span>显示图例</span>
          </Leg>
          <Spacer $h={1} />
          <CheckRow $pl={8} $g={4}><Check /><span>显示最大值和最小值</span></CheckRow>
          <CheckRow $pl={8} $g={4}><Check /><span>显示单位</span></CheckRow>
          <Spacer $h={3} />
          <Row $pl={8} $pr={0}>
            <RowLabel $l={61}>位置:</RowLabel>
            <Select>右<Caret /></Select>
          </Row>
          <Row $pl={8} $pr={0} $mt={6}>
            <RowLabel $l={61}>文本颜色:</RowLabel>
            <Select>黑色<Caret /></Select>
          </Row>
        </Fset>
        <Sect $mt={14}><SectArrow><Tri /></SectArrow>数字格式</Sect>
      </SetScroll>
      <Scrollbar top={2} h={570} w={16} />
    </SetBody>
  </Panel>
);

export default function App() {
  return (
    <Shell>
      <Global />
      <TitleBar>
        <QuickBar>
          {qa.map((q, i) => (q === 'sep' ? <QuickGap key={i} $m={-1} /> : <QuickIcon key={i}>{q}</QuickIcon>))}
          <Caret $s={3} $c="#ddd" $m="0 0 0 -1px" />
          <QuickGap $m={2} />
        </QuickBar>
        <AppTitle>Untitled.mph - COMSOL Multiphysics</AppTitle>
        <WinBtns>
          <WinBtn $w={28} $r="0 0 0 3px"><Sv w={11} h={4} vb="0 0 11 4"><rect width="11" height="3" fill="#fff" /></Sv></WinBtn>
          <WinBtn $w={26}><Sv w={11} h={11} vb="0 0 11 11"><rect x="3.5" y=".5" width="7" height="7" fill="none" stroke="#fff" /><rect x=".5" y="3.5" width="7" height="7" fill="#6d7077" stroke="#fff" strokeWidth="1.6" /></Sv></WinBtn>
          <WinBtn $w={47} $close $r="0 0 3px 0"><Sv w={11} h={10} vb="0 0 11 10"><path d="M1 1l9 8M10 1l-9 8" stroke="#fff" strokeWidth="2.4" /></Sv></WinBtn>
        </WinBtns>
      </TitleBar>

      <TabRow>
        <FileBtn>文件<Caret $c="#fff" /></FileBtn>
        {['主屏幕', '定义', '几何', '草图', '材料', '物理场', '网格', '研究', '结果', '开发工具'].map(t => <RTab key={t}>{t}</RTab>)}
        <RTabActive>电场 (emw)</RTabActive>
        <HelpBtn>?</HelpBtn>
      </TabRow>

      <Ribbon>
        <RGroup $w={101}>
          <RBody $pl={4}>
            <BigBtn $w={50}><BigIcon>{plotIcon}</BigIcon><BigText>绘制</BigText></BigBtn>
            <BigBtn $w={40}>
              <BigIcon>{plotInIcon}</BigIcon><BigText>绘制于</BigText><BigCaret><Caret $s={3} /></BigCaret>
            </BigBtn>
          </RBody>
          <RLabel>绘制</RLabel>
        </RGroup>
        <RSep />
        <RGroup $w={352}>
          <RBody $pl={11}>
            <SmallCol $w={98}>
              <SmallBtn>{I.surface}表面</SmallBtn>
              <SmallBtn>{I.height}带高度的表面</SmallBtn>
              <SmallBtn>{I.arrowSurf}面上箭头</SmallBtn>
            </SmallCol>
            <SmallCol $w={62}>
              <SmallBtn>{I.line}线</SmallBtn>
              <SmallBtn>{I.contour}等值线</SmallBtn>
              <SmallBtn>{I.stream}流线</SmallBtn>
            </SmallCol>
            <SmallCol $w={74}>
              <SmallBtn>{I.lineArrow}线上箭头</SmallBtn>
              <SmallBtn>{I.particle}粒子轨迹</SmallBtn>
              <SmallBtn>{I.mesh}网格</SmallBtn>
            </SmallCol>
            <SmallCol $w={45}>
              <SmallBtn>{I.annot}标注</SmallBtn>
            </SmallCol>
            <BigBtn $w={56}>
              <BigIcon><Sv s={24} vb="0 0 24 24"><rect width="24" height="24" fill={M} /></Sv></BigIcon>
              <BigText>更多绘图</BigText>
              <BigCaret><Caret $s={3} /></BigCaret>
            </BigBtn>
          </RBody>
          <RLabel>添加绘图</RLabel>
        </RGroup>
        <RSep />
        <RGroup $w={184}>
          <RBody $pl={10}>
            <SmallCol $w={85}>
              <SmallBtn $off>{I.colorExpr}颜色表达式</SmallBtn>
              <SmallBtn $off>{I.deform}变形</SmallBtn>
              <SmallBtn $off>{I.heightExpr}高度表达式</SmallBtn>
            </SmallCol>
            <SmallCol $w={85}>
              <SmallBtn $off>{I.filter}过滤器</SmallBtn>
              <SmallBtn $off>{I.select}选择</SmallBtn>
              <SmallBtn $off>{I.exportExpr}导出表达式</SmallBtn>
            </SmallCol>
          </RBody>
          <RLabel>属性</RLabel>
        </RGroup>
        <RSep />
        <RGroup $w={88}>
          <RBody $pl={9}>
            <SmallCol $w={78}>
              <ActiveBtn>{I.compute}计算</ActiveBtn>
              <SmallBtn>{I.cutStart}截线起点</SmallBtn>
              <SmallBtn>{I.cutEnd}截线终点</SmallBtn>
            </SmallCol>
          </RBody>
          <RLabel>选择</RLabel>
        </RGroup>
        <RSep />
        <RGroup $w={100}>
          <RBody $pl={8}>
            <BigBtn $w={44}><BigIcon>{I.image}</BigIcon><BigText>图像</BigText></BigBtn>
            <BigBtn $w={42}>
              <BigIcon>{I.movie}</BigIcon><BigText>动画</BigText><BigCaret><Caret $s={3} /></BigCaret>
            </BigBtn>
          </RBody>
          <RLabel>导出</RLabel>
        </RGroup>
        <RSep />
      </Ribbon>

      <Work>
        <Panel $w={299}>
          <HeadRow>
            <BigTitle $c="#2f8ccf">模型开发器</BigTitle>
            <PinIcons />
          </HeadRow>
          <ToolRow $h={18} $pl={2}>
            <ToolCell $w={23}><Sv s={14} vb="0 0 14 14"><path d="M1 7l5-4v3h7v2H6v3z" fill={BL} /></Sv></ToolCell>
            <ToolCell $w={24}><Sv s={14} vb="0 0 14 14"><path d="M13 7 8 3v3H1v2h7v3z" fill="#a9b6c3" /></Sv></ToolCell>
            <ToolCell $w={23}><Sv s={14} vb="0 0 14 14"><path d="M7 1 3 6h3v7h2V6h3z" fill="#a9b6c3" /></Sv></ToolCell>
            <ToolCell $w={23}><Sv s={14} vb="0 0 14 14"><path d="M7 13l4-5H8V1H6v7H3z" fill="#a9b6c3" /></Sv></ToolCell>
            <ToolCell $w={22}><Sv s={14} vb="0 0 14 14"><path d="M1 3h12" stroke="#2a4a6c" strokeWidth="1.4" /><path d="M1 8c3-4 9-4 12 0-3 4-9 4-12 0z" fill="#2f5d8c" /><circle cx="7" cy="8" r="1.6" fill="#fff" /></Sv></ToolCell>
            <ToolCell $w={24}><Sv s={15} vb="0 0 15 15"><path d="M1 2h9M1 5h9M1 8h9M1 11h9M1 14h9" stroke="#8a98a6" /><path d="M12.5 8V2M11 4l1.5-2 1.5 2" fill="none" stroke="#2f5d8c" /></Sv></ToolCell>
            <ToolCell $w={23}><Sv s={15} vb="0 0 15 15"><path d="M1 2h9M1 5h9M1 8h9M1 11h9M1 14h9" stroke="#2f5d8c" /><path d="M12.5 6v7M11 11l1.5 2 1.5-2" fill="none" stroke="#2f5d8c" /></Sv></ToolCell>
            <ToolCell $w={23}><Sv s={14} vb="0 0 14 14"><path d="M1 2h12M1 5h12M1 8h12M1 11h12" stroke="#8a98a6" strokeWidth="1.3" /></Sv></ToolCell>
            <Caret $c="#333" />
          </ToolRow>
          <TreeBox>
            <TreeList>
              {tree.map(([d, ex, ic, label, tag, sel], i) => (
                <TreeRowEl key={i} $d={d} $sel={sel}>
                  <Twisty>{ex === 1 ? <Tri open /> : ex === 2 ? <Tri /> : null}</Twisty>
                  <TreeIcon>{I[ic]}</TreeIcon>
                  <TreeLabel>{label}</TreeLabel>
                  {tag && <Tag>({tag})</Tag>}
                </TreeRowEl>
              ))}
            </TreeList>
            <Scrollbar top={1} h={589} />
          </TreeBox>
        </Panel>

        <Settings />

        <Stack>
          <Panel $h={554}>
            <TabStrip $h={31}>
              <GTab $on>图形</GTab>
              <GTab $gap={9} $pr={5}>收敛图 1<Close>✕</Close></GTab>
              <PinSlot><PinIcons dim /></PinSlot>
            </TabStrip>
            <ToolRow $h={33} $pl={3} $bg="#f9fbfe">
              <ToolCell $w={23}><ZoomIc plus /></ToolCell>
              <ToolCell $w={23}><ZoomIc /></ToolCell>
              <ToolCell $w={24}><ZoomIc plus box /></ToolCell>
              <Caret $c="#333" $m="0 0 0 1px" />
              <ToolCell $w={28} $ml={6}><Sv s={17} vb="0 0 16 16"><rect x="1" y="1" width="14" height="14" fill="#fff" stroke="#9a9a9a" /><path d="M8 3v10M3 8h10M8 3l-2 2M8 3l2 2M8 13l-2-2M8 13l2-2M3 8l2-2M3 8l2 2M13 8l-2-2M13 8l-2 2" fill="none" stroke={BL} strokeWidth=".9" /></Sv></ToolCell>
              <ToolSep $l={1} $r={5} />
              <ToolCell $w={20}><Sv s={18} vb="0 0 18 18"><path d="M9 10V2" stroke="#2c9a3a" strokeWidth="1.2" /><path d="M9 10 2 7" stroke="#2c9a3a" strokeWidth="1.2" /><path d="M9 10 16 6" stroke="#c2478a" strokeWidth="1.2" /><path d="M9 10v6" stroke={BL} strokeWidth="1.2" /></Sv></ToolCell>
              <Caret $c="#333" $m="0 0 0 5px" />
              <ToolSep $l={10} $r={6} />
              <ToolToggle><Sv s={14} vb="0 0 14 14"><rect x="1" y="1" width="12" height="12" fill="#fff" stroke="#3f6fa3" /><path d="M5 1v12M9 1v12M1 5h12M1 9h12" stroke="#3f6fa3" /></Sv></ToolToggle>
              <ToolCell $w={18} $ml={5}><ToolToggle><Sv s={14} vb="0 0 14 14"><rect x="1" y="1" width="12" height="12" fill="#eef2f6" stroke="#3f6fa3" /><rect x="8" y="3" width="4" height="9" fill="#d86b2b" /><rect x="8" y="3" width="4" height="3" fill="#e8b23a" /></Sv></ToolToggle></ToolCell>
              <ToolCell $w={20} $ml={4}><Sv s={16}><circle cx="8" cy="8" r="5.5" fill="none" stroke="#3f7fb5" strokeWidth="3" strokeDasharray="5.5 1.4" /></Sv></ToolCell>
              <Caret $c="#333" $m="0 0 0 5px" />
              <ToolCell $w={22} $ml={7}><Sv s={16}><path d="M1 4h4l1-2h4l1 2h4v10H1z" fill="#3f7fb5" /><circle cx="8" cy="9" r="3" fill="#fff" /><circle cx="8" cy="9" r="1.6" fill="#3f7fb5" /></Sv></ToolCell>
              <ToolCell $w={24}><Sv s={16}><rect x="4" y="1" width="8" height="5" fill="#fff" stroke="#3f6fa3" /><rect x="1" y="6" width="14" height="6" rx="1" fill="#3f6fa3" /><rect x="4" y="10" width="8" height="5" fill="#fff" stroke="#3f6fa3" /></Sv></ToolCell>
            </ToolRow>
            <PlotArea><Plot /></PlotArea>
          </Panel>
          <Panel $h={164}>
            <TabStrip $h={27}>
              <GTab $on>消息<Close>✕</Close></GTab>
              <GTab>进度</GTab>
              <GTab>日志</GTab>
              <GTab $gap={9} $pr={5}>表格<Close>✕</Close></GTab>
              <PinSlot><PinIcons dim /></PinSlot>
            </TabStrip>
            <LogBar>
              <Sv w={14} h={16} vb="0 0 14 16"><path d="M2 0l4 7" stroke="#6a5a4a" strokeWidth="1.4" /><path d="M5 6l3-1 4 8-5 3z" fill="#c9a06a" stroke="#9a6f3a" strokeWidth=".5" /></Sv>
            </LogBar>
            <LogBox>
              <LogText>
                <LogLine>[2022-11-18 上午9:15] 保存的文件：G:\comsol学习\Comsol经典实例\Comsol经典实例029：同轴电缆的阻抗\Untitled.mph</LogLine>
                <LogLine>[2022-11-18 上午9:17] 定型几何包含 “4 个域” 、 “12 个边界” 及 “8 个顶点” 。</LogLine>
                <LogLine>[2022-11-18 上午9:35] 完整网格包含 502 个域单元和 76 个边界元。</LogLine>
                <LogLine>[2022-11-18 上午9:40] 求解的自由度数：3610。</LogLine>
                <LogLine>[2022-11-18 上午9:40] 求解时间 (研究 1): 8 s。</LogLine>
              </LogText>
              <Scrollbar top={13} h={55} w={16} />
            </LogBox>
          </Panel>
        </Stack>
      </Work>
      <Status>935 MB | 1171 MB</Status>
    </Shell>
  );
}
